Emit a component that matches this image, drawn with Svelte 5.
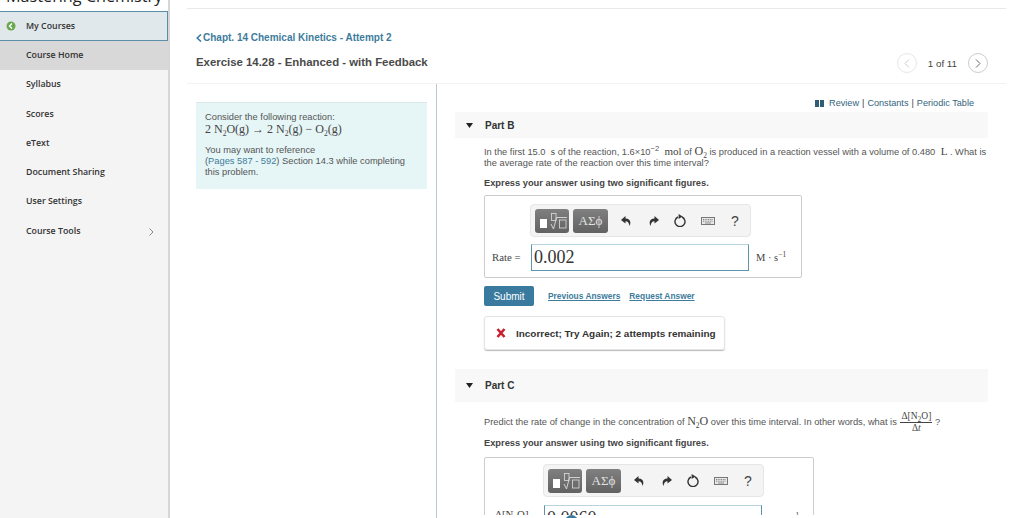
<script>
  const navItems = ["Course Home", "Syllabus", "Scores", "eText", "Document Sharing", "User Settings", "Course Tools"];
</script>

{#snippet toolbar()}
  <div class="toolbar">
    <span class="tool-btn template">
      <svg width="34" height="24" viewBox="0 0 34 24" fill="none">
        <rect x="5" y="10" width="7" height="9" fill="#fff" />
        <rect x="16.5" y="4.5" width="4.5" height="7" stroke="#ddd" stroke-width="0.8" />
        <path d="M16 15 L18.5 20 L21.5 8.5 H32" stroke="#ddd" stroke-width="0.9" />
        <rect x="24.5" y="11" width="6.5" height="8" stroke="#ddd" stroke-width="0.8" />
      </svg>
    </span>
    <span class="tool-btn symbols">ΑΣϕ</span>
    <svg class="tool-icon undo" width="10" height="10" viewBox="0 0 10 10"><path d="M4.5 0 L0 4 L4.5 7.5 V5.3 C7 5.3 8 7 8.5 10 C10.5 6 9 2.5 4.5 2.5 Z" fill="#333" /></svg>
    <svg class="tool-icon redo" width="10" height="10" viewBox="0 0 10 10"><path d="M5.5 0 L10 4 L5.5 7.5 V5.3 C3 5.3 2 7 1.5 10 C-0.5 6 1 2.5 5.5 2.5 Z" fill="#333" /></svg>
    <svg class="tool-icon reset" width="12" height="13" viewBox="0 0 12 13" fill="none"><path d="M8 3 A5 5 0 1 1 4 3" stroke="#333" stroke-width="1.4" /><path d="M4.6 0 L8.6 2.6 L4.6 5 Z" fill="#333" /></svg>
    <svg class="tool-icon keyboard" width="14" height="8" viewBox="0 0 14 8" fill="none"><rect x="0.5" y="0.5" width="13" height="7" fill="#e8e8e8" stroke="#777" /><path d="M2 2.5 H12 M2 4.2 H12" stroke="#777" stroke-width="0.9" stroke-dasharray="1 0.7" /><path d="M4 6 H10" stroke="#777" stroke-width="0.8" /></svg>
    <span class="help">?</span>
  </div>
{/snippet}

<div class="page">
  <aside class="sidebar">
    <div class="logo"><span>Mastering Chemistry</span></div>
    <div class="nav-item my-courses">
      <svg class="back-dot" width="10" height="10" viewBox="0 0 10 10"><circle cx="5" cy="5" r="4.5" fill="#6aa84f" /><path d="M6 2.5 L3.5 5 L6 7.5" fill="none" stroke="#fff" stroke-width="1.4" /></svg>
      My Courses
    </div>
    {#each navItems as item, i}
      <div class="nav-item" class:active={i === 0}>
        {item}
        {#if item === "Course Tools"}
          <svg class="chevron" width="5" height="8" viewBox="0 0 5 8" fill="none"><path d="M0.5 0.5 L4 4 L0.5 7.5" stroke="#888" /></svg>
        {/if}
      </div>
    {/each}
  </aside>

  <main class="content">
    <header class="head">
      <a class="chapter">
        <svg width="6" height="8" viewBox="0 0 6 8" fill="none"><path d="M5 0.5 L1.2 4 L5 7.5" stroke="#3a7ca5" stroke-width="1.6" /></svg>
        Chapt. 14 Chemical Kinetics - Attempt 2
      </a>
      <div class="title-row">
        <h1>Exercise 14.28 - Enhanced - with Feedback</h1>
        <div class="pager">
          <span class="round off"><svg width="6" height="9" viewBox="0 0 6 9" fill="none"><path d="M5 0.5 L1 4.5 L5 8.5" stroke="#ccc" /></svg></span>
          <span class="count">1 of 11</span>
          <span class="round"><svg width="6" height="9" viewBox="0 0 6 9" fill="none"><path d="M1 0.5 L5 4.5 L1 8.5" stroke="#666" /></svg></span>
        </div>
      </div>
    </header>

    <div class="columns">
      <section class="intro-col">
        <div class="intro">
          <p>Consider the following reaction:</p>
          <p class="equation">2 N<sub>2</sub>O(g) → 2 N<sub>2</sub>(g) − O<sub>2</sub>(g)</p>
          <p class="ref">You may want to reference<br /><span class="plain">(<a>Pages 587 - 592</a>) Section 14.3 while completing<br />this problem.</span></p>
        </div>
      </section>

      <section class="parts">
        <div class="resources">
          <svg width="9" height="7" viewBox="0 0 9 7"><rect width="4" height="7" fill="#2f5d73" /><rect x="5" width="4" height="7" fill="#2f5d73" /></svg>
          <span>Review</span><i>|</i><span>Constants</span><i>|</i><span>Periodic Table</span>
        </div>

        <div class="part-band">
          <svg width="7" height="5" viewBox="0 0 7 5"><path d="M0 0 H7 L3.5 5 Z" fill="#222" /></svg>
          <b>Part B</b>
        </div>
        <div class="part-body">
          <p class="question">In the first 15.0 <span class="m">&nbsp;s</span> of the reaction, 1.6×10<sup>−2</sup> <span class="m">&nbsp;mol</span> of <span class="m big">O<sub>2</sub></span> is produced in a reaction vessel with a volume of 0.480 <span class="m">&nbsp;L</span> . What is the average rate of the reaction over this time interval?</p>
          <p class="express">Express your answer using two significant figures.</p>
          <div class="answer-box">
            {@render toolbar()}
            <div class="answer-row">
              <span class="m label">Rate =</span>
              <div class="input">0.002</div>
              <span class="m units">M · s<sup>−1</sup></span>
            </div>
          </div>
          <div class="actions">
            <button class="submit">Submit</button>
            <a>Previous Answers</a>
            <a>Request Answer</a>
          </div>
          <div class="feedback">
            <svg width="10" height="10" viewBox="0 0 10 10"><path d="M1.5 1 L8.5 9 M8.5 1 L1.5 9" stroke="#c8202c" stroke-width="2.6" /></svg>
            <b>Incorrect; Try Again; 2 attempts remaining</b>
          </div>
        </div>

        <div class="part-band part-c">
          <svg width="7" height="5" viewBox="0 0 7 5"><path d="M0 0 H7 L3.5 5 Z" fill="#222" /></svg>
          <b>Part C</b>
        </div>
        <div class="part-body clipped">
          <p class="question single">Predict the rate of change in the concentration of <span class="m big">N<sub>2</sub>O</span> over this time interval. In other words, what is
            <span class="frac m"><span>Δ[N<sub>2</sub>O]</span><span>Δ<em>t</em></span></span> ?</p>
          <p class="express second">Express your answer using two significant figures.</p>
          <div class="answer-box wide">
            {@render toolbar()}
            <div class="answer-row">
              <span class="m label">Δ[N<sub>2</sub>O]</span>
              <div class="input">0.0060</div>
              <span class="m units">M · s<sup>−1</sup></span>
            </div>
          </div>
        </div>
      </section>
    </div>
  </main>
  <span class="floating-dot"></span>
</div>

<style>
  :global(body) {
    margin: 0;
    background: #fff;
  }

  .page {
    position: relative;
    display: flex;
    height: 518px;
    overflow: hidden;
    font-family: "Liberation Sans", Arial, sans-serif;
    color: #333;
  }

  .floating-dot {
    position: absolute;
    left: 565px;
    top: 515px;
    width: 13px;
    height: 13px;
    border-radius: 50%;
    background: #397a9e;
  }

  .sidebar {
    width: 168px;
    flex: none;
    background: #f4f4f4;
    border-right: 2px solid #d6d6d6;
    font-family: "Open Sans", sans-serif;
    font-size: 8.8px;
    font-weight: 600;
    color: #333;
  }

  .logo {
    height: 11px;
    background: #fff;
    overflow: hidden;
    display: flex;
    align-items: flex-start;
    padding-left: 6px;
    font-size: 16.2px;
    font-weight: 400;
    color: #222;
    line-height: 16px;
  }

  .logo span {
    white-space: nowrap;
    margin-top: -12px;
  }

  .nav-item {
    position: relative;
    height: 29.25px;
    line-height: 29px;
    padding-left: 26px;
    box-sizing: border-box;
  }

  .my-courses {
    height: 30px;
    line-height: 28px;
    background: #e0e8ec;
    border: 1px solid #5b8fa8;
    border-left: none;
    padding-left: 26px;
  }

  .active {
    background: #d8d8d8;
  }

  .back-dot {
    position: absolute;
    left: 6px;
    top: 9px;
  }

  .chevron {
    position: absolute;
    left: 149px;
    top: 11px;
  }

  .content {
    flex: 1;
    min-width: 0;
    display: flex;
    flex-direction: column;
    padding: 0 18px 0 17px;
  }

  .head {
    border-top: 1px solid #e8e8e8;
    border-bottom: 1px solid #f2f2f2;
    margin-top: 8px;
    height: 74px;
    flex: none;
    padding: 0 0 0 9px;
  }

  .chapter {
    display: flex;
    align-items: center;
    gap: 1px;
    margin-top: 22px;
    padding-top: 1px;
    font-size: 10px;
    font-weight: 700;
    line-height: 12px;
    color: #3d7c9c;
  }

  .title-row {
    display: flex;
    justify-content: space-between;
    align-items: center;
    margin-top: 11px;
    padding-right: 18px;
    height: 14px;
  }

  h1 {
    margin: 0;
    font-size: 11.4px;
    font-weight: 700;
    color: #4a4a4a;
  }

  .pager {
    display: flex;
    align-items: center;
    gap: 11px;
    font-size: 9.8px;
    color: #444;
    margin-top: 2px;
  }

  .round {
    width: 20px;
    height: 20px;
    border: 1px solid #ccc;
    border-radius: 50%;
    display: flex;
    align-items: center;
    justify-content: center;
    box-sizing: border-box;
  }

  .round.off {
    border-color: #e6e6e6;
  }

  .columns {
    flex: 1;
    display: flex;
    min-height: 0;
  }

  .intro-col {
    width: 231px;
    margin-left: 9px;
    padding-top: 18px;
    flex: none;
  }

  .intro {
    height: 87px;
    box-sizing: border-box;
    background: #e6f5f6;
    border-top: 1px solid #dbe8ea;
    padding: 9px 9px;
    font-size: 9.3px;
    line-height: 11px;
    color: #555;
  }

  .intro p {
    margin: 0;
  }

  .intro .equation {
    font-family: "Liberation Serif", serif;
    font-size: 12px;
    color: #444;
    line-height: 12px;
  }

  .intro sub {
    font-size: 7.5px;
    line-height: 0;
  }

  .intro .ref {
    margin-top: 10px;
  }

  .plain a {
    color: #3d7c9c;
  }

  .parts {
    flex: 1;
    margin: 0 18px 0 9px;
    border-left: 1px solid #b9c9d6;
    padding-left: 18px;
    min-width: 0;
  }

  .resources {
    height: 28px;
    display: flex;
    justify-content: flex-end;
    align-items: center;
    gap: 3px;
    padding-right: 14px;
    font-size: 9.15px;
    color: #33647d;
    box-sizing: border-box;
    padding-top: 10px;
  }

  .resources svg {
    margin-right: 2px;
  }

  .resources i {
    font-style: normal;
    color: #444;
  }

  .part-band {
    height: 26px;
    background: #f8f8f8;
    display: flex;
    align-items: center;
    gap: 12px;
    padding-left: 11px;
    font-size: 10px;
    color: #333;
  }

  .part-c {
    height: 33px;
    margin-top: 19px;
  }

  .part-body {
    padding-left: 29px;
  }

  .clipped {
    height: 113px;
    overflow: hidden;
  }

  .question {
    margin: 8px 0 0;
    font-size: 9.3px;
    line-height: 11px;
    color: #555;
  }

  .question.single {
    margin-top: 7px;
    line-height: 24px;
    height: 24px;
    white-space: nowrap;
  }

  .m {
    font-family: "Liberation Serif", serif;
    color: #444;
  }

  .question .m {
    font-size: 11px;
  }

  .question .big {
    font-size: 12px;
  }

  sup {
    font-size: 7.5px;
    line-height: 0;
  }

  .m sub {
    font-size: 7.5px;
    line-height: 0;
  }

  .question .frac {
    display: inline-flex;
    flex-direction: column;
    vertical-align: middle;
    align-items: center;
    font-size: 9.5px;
    line-height: 11px;
    margin-left: 1px;
  }

  .frac span:first-child {
    border-bottom: 1px solid #444;
    padding: 0 1px;
  }

  .express {
    margin: 9px 0 0;
    font-size: 9.3px;
    font-weight: 700;
    line-height: 11px;
    color: #444;
  }

  .express.second {
    margin-top: 5px;
  }

  .answer-box {
    margin-top: 6px;
    width: 318px;
    height: 83px;
    box-sizing: border-box;
    border: 1px solid #ccc;
    border-radius: 2px;
    padding-top: 8px;
  }

  .answer-box.wide {
    width: 330px;
    height: 90px;
    margin-top: 8px;
    padding-top: 6px;
  }

  .toolbar {
    width: 221px;
    height: 33px;
    box-sizing: border-box;
    margin-left: 45px;
    background: #f4f4f4;
    border: 1px solid #e6e6e6;
    border-radius: 4px;
    display: flex;
    align-items: center;
    padding-left: 4px;
  }

  .wide .toolbar {
    margin-left: 58px;
  }

  .tool-btn {
    height: 24px;
    width: 34px;
    flex: none;
    border-radius: 3px;
    background: linear-gradient(#808080, #626262);
    color: #e2e2e2;
    display: flex;
    align-items: center;
    justify-content: center;
    box-sizing: border-box;
  }

  .symbols {
    width: 35px;
    margin-left: 4px;
    font-family: "Liberation Serif", "DejaVu Serif", serif;
    font-size: 13px;
  }

  .tool-icon {
    flex: none;
  }

  .undo {
    margin-left: 13px;
  }

  .redo {
    margin-left: 18px;
  }

  .reset {
    margin-left: 15px;
  }

  .keyboard {
    margin-left: 15px;
  }

  .help {
    margin-left: 16px;
    font-size: 14px;
    color: #444;
    font-family: "Liberation Sans", sans-serif;
  }

  .answer-row {
    display: flex;
    align-items: center;
    margin-top: 7px;
    padding-left: 7px;
  }

  .wide .answer-row {
    margin-top: 8px;
    padding-left: 10px;
  }

  .label {
    width: 39px;
    font-size: 10.8px;
    flex: none;
    margin-bottom: 2px;
  }

  .wide .label {
    width: 49px;
    align-self: flex-start;
    margin-top: 3px;
  }

  .input {
    width: 218px;
    height: 27px;
    flex: none;
    box-sizing: border-box;
    border: 1px solid #5c93ad;
    border-top-color: #b8d4e0;
    padding-left: 2px;
    font-family: "Liberation Serif", serif;
    font-size: 18px;
    line-height: 25px;
    color: #333;
  }

  .units {
    margin-left: 7px;
    font-size: 10.5px;
  }

  .actions {
    display: flex;
    align-items: center;
    margin-top: 8px;
    font-size: 8.4px;
    font-weight: 700;
  }

  .actions a {
    color: #3d7c9c;
    text-decoration: underline;
    margin-left: 9px;
  }

  .actions a:first-of-type {
    margin-left: 14px;
  }

  .submit {
    width: 50px;
    height: 20px;
    border: none;
    border-radius: 2px;
    padding: 0;
    background: #397a9e;
    color: #fff;
    font-family: "Liberation Sans", sans-serif;
    font-size: 10px;
  }

  .feedback {
    margin-top: 10px;
    width: 241px;
    height: 34px;
    box-sizing: border-box;
    display: flex;
    align-items: center;
    gap: 10px;
    padding-left: 11px;
    border: 1px solid #e4e4e4;
    border-radius: 3px;
    box-shadow: 0 1px 1px #bbb;
    font-size: 9.95px;
    color: #333;
  }
</style>
